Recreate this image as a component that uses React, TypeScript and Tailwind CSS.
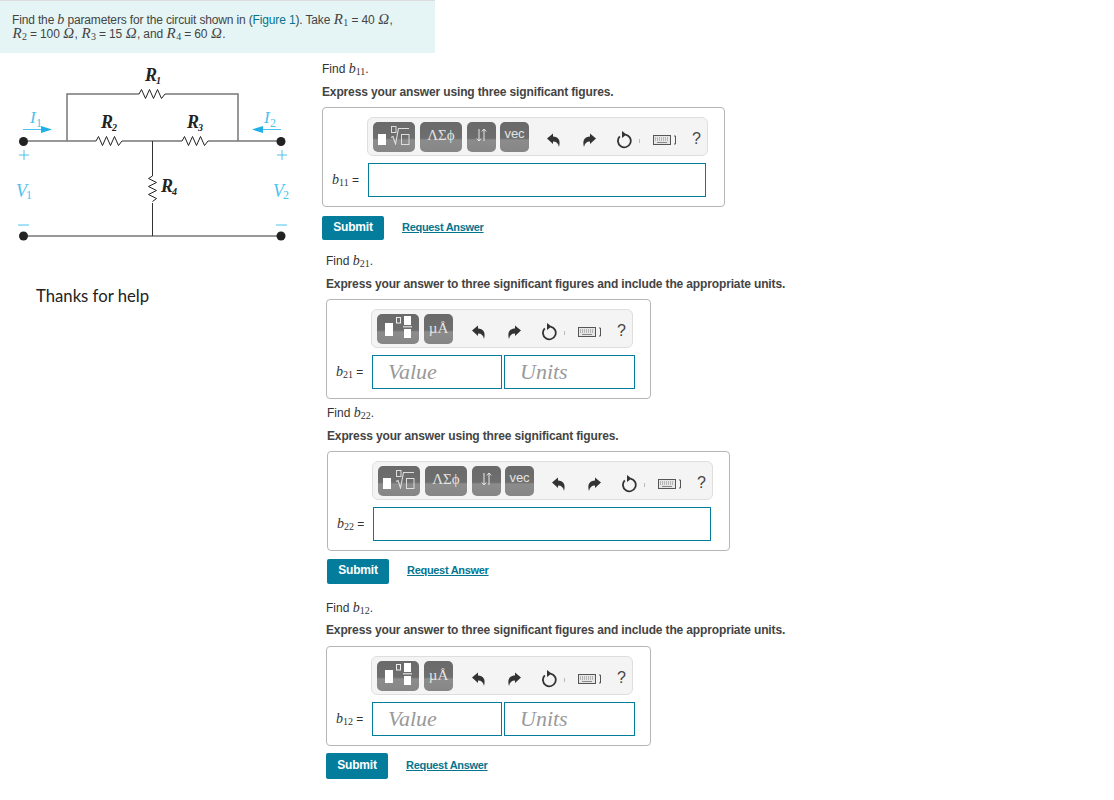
import React from 'react'

const serif = { fontFamily: '"Liberation Serif", serif' }

const Sym = ({ v, s, big }: { v: string; s?: string; big?: boolean }) => (
  <span className="font-['Liberation_Serif',serif] whitespace-nowrap">
    <i className={big ? 'text-[15px] mx-[0.5px]' : 'text-[14px]'}>{v}</i>
    {s && <span className="text-[10px] relative top-[2px]">{s}</span>}
  </span>
)

const Undo = ({ flip }: { flip?: boolean }) => (
  <svg width="14" height="15" viewBox="0 0 14 15" className={flip ? '-scale-x-100' : ''}>
    <path d="M0 5.5 L6 0.5 V3.5 C11 3.5 14 7 12 14 C11.5 10.5 9.5 8.5 6 8.5 V11 Z" fill="#333" />
  </svg>
)

const Reset = () => (
  <svg width="16" height="18" viewBox="0 0 16 18" className="-mt-[2px]">
    <path d="M9.5 3.6 A6.4 6.4 0 1 1 3.8 5.4" fill="none" stroke="#333" strokeWidth="1.8" />
    <path d="M6 0 L10.5 3.6 L6 7 Z" fill="#333" />
  </svg>
)

const Keyboard = () => (
  <svg width="24" height="11" viewBox="0 0 24 11">
    <rect x="0.5" y="0.5" width="17" height="9" fill="#e6e6e6" stroke="#555" />
    <path d="M2 3h14M2 5h14" stroke="#888" strokeWidth="1" strokeDasharray="1 1" />
    <path d="M4 7.5h10" stroke="#888" />
    <path d="M21 1h1.5v8H21" fill="none" stroke="#555" />
  </svg>
)

const ToolButton = ({ w, children }: { w: string; children: React.ReactNode }) => (
  <div className={`${w} h-[30px] rounded-[5px] bg-[linear-gradient(#6a6a6a_0%,#6e6e6e_54%,#8c8c8c_60%,#868686_100%)] flex items-center justify-center text-[#e4e4e4]`}>
    {children}
  </div>
)

const SqrtIcon = () => (
  <svg width="32" height="19" viewBox="0 0 32 19" className="-mt-[3px]">
    <rect x="0" y="8" width="8" height="11" fill="#fff" />
    <path d="M13 11.5l2-1 2.5 7.5 3-15.5h10.5" fill="none" stroke="#ddd" strokeWidth="1.1" />
    <rect x="13.5" y="0.5" width="4.5" height="6" fill="none" stroke="#ddd" />
    <rect x="23.5" y="8.5" width="7.5" height="10" fill="none" stroke="#ddd" />
  </svg>
)

const FracIcon = () => (
  <svg width="27" height="22" viewBox="0 0 27 22" className="-mt-[3px]">
    <rect x="0" y="7" width="8" height="13" fill="#fff" />
    <rect x="11.5" y="1.5" width="4" height="5.5" fill="none" stroke="#eee" />
    <rect x="19" y="0" width="7" height="9" fill="#fff" />
    <rect x="18" y="10" width="9" height="1.5" fill="#ccc" />
    <rect x="19" y="13" width="7" height="9" fill="#fff" />
  </svg>
)

const UpDown = () => (
  <svg width="11" height="14" viewBox="0 0 11 14" className="-mt-[3px]">
    <path d="M3 1V13M0.8 10.5L3 13L5.2 10.5M8 13V1M5.8 3.5L8 1L10.2 3.5" fill="none" stroke="#e8e8e8" strokeWidth="1" />
  </svg>
)

const ToolEnd = ({ gaps }: { gaps: string[] }) => (
  <div className="flex items-center pt-2">
    <span className={gaps[0]}><Undo /></span>
    <span className={gaps[1]}><Undo flip /></span>
    <span className={gaps[2]}><Reset /></span>
    <span className="ml-[7px] w-px h-[4px] bg-[#bbb]" />
    <span className="ml-[13px] flex"><Keyboard /></span>
    <span className={`${gaps[3]} text-[16px] leading-4 text-[#444] -mt-[4px]`}>?</span>
  </div>
)

const MathToolbar = () => (
  <div className="w-[341px] h-[39px] rounded-[6px] border border-[#dedede] bg-[#f4f4f4] flex items-center pl-[5px]">
    <div className="flex">
      <ToolButton w="w-[42px]"><SqrtIcon /></ToolButton>
      <ToolButton w="w-[42px] ml-[5px]"><span className="text-[15px] -mt-[3px]" style={serif}>ΛΣϕ</span></ToolButton>
      <ToolButton w="w-[29px] ml-[5px]"><UpDown /></ToolButton>
      <ToolButton w="w-[29px] ml-[4px]"><span className="text-[13px] -mt-[5px]">vec</span></ToolButton>
    </div>
    <ToolEnd gaps={['ml-[18px]', 'ml-[21px]', 'ml-[20px]', 'ml-[15px]']} />
  </div>
)

const UnitToolbar = () => (
  <div className="w-[262px] h-[39px] rounded-[6px] border border-[#dedede] bg-[#f4f4f4] flex items-center pl-[5px]">
    <div className="flex">
      <ToolButton w="w-[42px]"><FracIcon /></ToolButton>
      <ToolButton w="w-[29px] ml-[5px]"><span className="text-[15px] -mt-[1px]" style={serif}>µÅ</span></ToolButton>
    </div>
    <ToolEnd gaps={['ml-[19px]', 'ml-[21px]', 'ml-[20px]', 'ml-[15px]']} />
  </div>
)

const Prompt = ({ s, text, top, gap }: { s: string; text: string; top: string; gap: string }) => (
  <>
    <p className={`${top} h-4 leading-4 text-[12px] text-[#333]`}>
      Find <Sym v="b" s={s} />.
    </p>
    <p className={`${gap} h-4 leading-4 text-[12px] font-bold text-[#444] tracking-[-0.14px] whitespace-nowrap`}>{text}</p>
  </>
)

const Label = ({ s }: { s: string }) => (
  <div className="w-[45px] pl-[9px] -mt-[2px] text-[12px] text-[#333] whitespace-nowrap">
    <Sym v="b" s={s} /> =
  </div>
)

const ScalarBox = ({ s, top }: { s: string; top: string }) => (
  <div className={`${top} w-[403px] h-[100px] rounded-[4px] border border-[#b5b5b5] pt-[9px]`}>
    <div className="pl-[44px]"><MathToolbar /></div>
    <div className="mt-[7px] flex items-center">
      <Label s={s} />
      <div className="w-[338px] h-[34px] border border-[#047d9c] bg-white" />
    </div>
  </div>
)

const UnitBox = ({ s, top }: { s: string; top: string }) => (
  <div className={`${top} w-[325px] h-[100px] rounded-[4px] border border-[#b5b5b5] pt-[9px]`}>
    <div className="pl-[44px]"><UnitToolbar /></div>
    <div className="mt-[7px] flex items-center">
      <Label s={s} />
      <div className="w-[130px] h-[34px] border border-[#047d9c] pl-[15px] leading-[32px] text-[22px] italic text-[#999]" style={serif}>Value</div>
      <div className="ml-[2px] w-[131px] h-[34px] border border-[#047d9c] pl-[15px] leading-[32px] text-[22px] italic text-[#999]" style={serif}>Units</div>
    </div>
  </div>
)

const Actions = ({ top, h }: { top: string; h: string }) => (
  <div className={`${top} flex items-center`}>
    <button className={`${h} w-[62px] pb-[3px] rounded-[2px] bg-[#047d9c] text-white text-[12px] font-bold tracking-[-0.2px]`}>Submit</button>
    <a className="ml-[18px] -mt-[2px] text-[11px] font-bold text-[#04758f] underline tracking-[-0.3px]">Request Answer</a>
  </div>
)

const Circuit = () => {
  const zig = (x: number, y: number) =>
    `M${x} ${y}l2.5 -4.5 4 9 4 -9 4 9 4 -9 4 9 3.5 -4.5`
  const labelCls = { fontFamily: '"Liberation Serif", serif', fontStyle: 'italic' }
  return (
    <svg width="322" height="227" viewBox="0 53 322 227">
      <g fill="none" stroke="#777" strokeWidth="1.5">
        <path d="M67 141V94H139M165 94H238V141" />
        <path d="M23 141H96M122 141H182M208 141H281" />
      </g>
      <g fill="none" stroke="#222" strokeWidth="1">
        <path d={zig(139, 94)} />
        <path d={zig(96, 141)} />
        <path d={zig(182, 141)} />
        <path d="M152.5 176l-4 2.5 8 4 -8 4 8 4 -8 4 8 4 -4 3" />
      </g>
      <path d="M152.5 141V176M152.5 203V236M23 236H281" fill="none" stroke="#333" strokeWidth="1" />
      <g fill="#222">
        <circle cx="23.5" cy="141.5" r="4.5" />
        <circle cx="281" cy="141.5" r="4.5" />
        <circle cx="23.5" cy="236" r="4.5" />
        <circle cx="281" cy="236" r="4.5" />
      </g>
      <g fill="#222" fontWeight="bold" fontSize="18" style={labelCls}>
        <text x="145" y="81">R</text><text x="156" y="84" fontSize="10">1</text>
        <text x="101" y="128">R</text><text x="112" y="131" fontSize="10">2</text>
        <text x="187" y="128">R</text><text x="198" y="131" fontSize="10">3</text>
        <text x="161" y="192">R</text><text x="172" y="195" fontSize="10">4</text>
      </g>
      <g fill="#4cc2ee" style={labelCls} fontSize="17">
        <text x="30" y="123">I</text><text x="36" y="127" fontSize="12" fontStyle="normal">1</text>
        <text x="264" y="123">I</text><text x="270" y="127" fontSize="12" fontStyle="normal">2</text>
        <text x="16" y="197" fontSize="18">V</text><text x="26" y="199" fontSize="12" fontStyle="normal">1</text>
        <text x="273" y="197" fontSize="18">V</text><text x="283" y="199" fontSize="12" fontStyle="normal">2</text>
      </g>
      <g stroke="#4cc2ee" strokeWidth="1" fill="none">
        <path d="M23 129.5H42M254 129.5H281" />
        <path d="M19 155H29M24 150V160M277 155H287M282 150V160" />
        <path d="M18 225H29M276 225H287" />
      </g>
      <path d="M52 129.5L41 126V133ZM252 129.5L263 126V133Z" fill="#1fb0ea" />
    </svg>
  )
}

export default function App() {
  return (
    <div className="w-[1114px] h-[800px] bg-white overflow-hidden font-['Liberation_Sans',Arial,sans-serif]">
      <div className="w-[435px] h-[53px] border-t border-[#dcdcdc] bg-[#e5f5f6] pt-[11px] pl-3 text-[12px] text-[#444] tracking-[-0.15px]">
        <p className="h-[14px] leading-[14px]">
          Find the <Sym v="b" /> parameters for the circuit shown in (<span className="text-[#04758f]">Figure 1</span>). Take <Sym v="R" s="1" big /> = 40 <Sym v="Ω" big />,
        </p>
        <p className="h-[14px] leading-[14px]">
          <Sym v="R" s="2" big /> = 100 <Sym v="Ω" big />, <Sym v="R" s="3" big /> = 15 <Sym v="Ω" big />, and <Sym v="R" s="4" big /> = 60 <Sym v="Ω" big />.
        </p>
      </div>
      <div className="flex">
        <div className="w-[322px] shrink-0">
          <Circuit />
          <p className="pl-9 mt-[4px] text-[16.7px] leading-6 text-[#222] font-['Lato',sans-serif]">Thanks for help</p>
        </div>
        <div className="flex-1">
          <Prompt s="11" text="Express your answer using three significant figures." top="mt-2" gap="mt-[7px]" />
          <ScalarBox s="11" top="mt-[7px]" />
          <Actions top="mt-[9px]" h="h-6" />

          <div className="ml-1">
            <Prompt s="21" text="Express your answer to three significant figures and include the appropriate units." top="mt-[13px]" gap="mt-[7px]" />
            <UnitBox s="21" top="mt-[7px]" />
          </div>

          <div className="ml-[5px]">
            <Prompt s="22" text="Express your answer using three significant figures." top="mt-[6px]" gap="mt-[7px]" />
            <ScalarBox s="22" top="mt-[7px]" />
            <Actions top="mt-2" h="h-[25px]" />
          </div>

          <div className="ml-1">
            <Prompt s="12" text="Express your answer to three significant figures and include the appropriate units." top="mt-4" gap="mt-[6px]" />
            <UnitBox s="12" top="mt-2" />
            <Actions top="mt-[7px]" h="h-[26px]" />
          </div>
        </div>
      </div>
    </div>
  )
}
